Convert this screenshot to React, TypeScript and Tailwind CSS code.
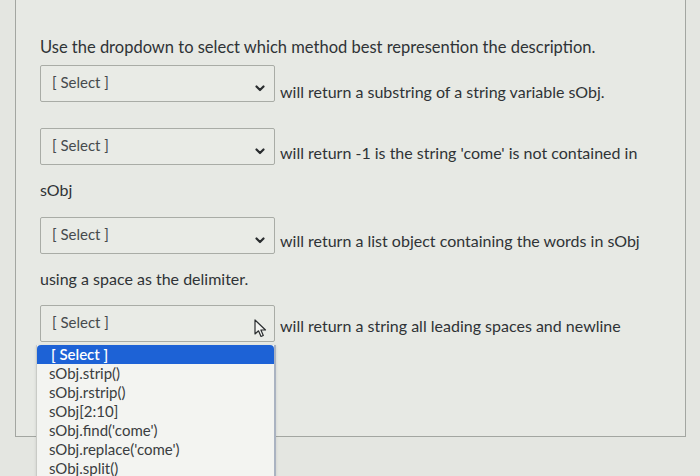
import React from "react";

// Canvas-style quiz question: "matching" dropdowns, last one opened.

const OPTIONS = [
  "sObj.strip()",
  "sObj.rstrip()",
  "sObj[2:10]",
  "sObj.find('come')",
  "sObj.replace('come')",
  "sObj.split()",
];

function Chevron() {
  return (
    <svg width="10" height="7" viewBox="0 0 10 7" className="mt-[12px] shrink-0">
      <polyline points="1.5,1.5 5,5 8.5,1.5" fill="none" stroke="#2a2d2f" strokeWidth="2.2" strokeLinecap="round" strokeLinejoin="round" />
    </svg>
  );
}

function Cursor() {
  return (
    <svg width="13" height="19" viewBox="0 0 13 19" className="mt-[6px] mr-[-2px] shrink-0">
      <path d="M1 1 L1 15 L4.5 11.8 L7 17.5 L9.3 16.5 L6.9 11 L11.5 11 Z" fill="#f4f5f2" stroke="#2a2d2f" strokeWidth="1.2" strokeLinejoin="round" />
    </svg>
  );
}

function OpenList() {
  return (
    <div className="absolute left-[-5px] top-[39px] w-[240px] h-[150px] bg-[#f3f4f1] border-l border-[#c9cbc6] border-r-2 border-r-[#aab3c1] shadow-sm flex flex-col">
      <div className="h-[19px] bg-[#1d62d6] rounded-t-[4px] pl-[14px] text-[15px] leading-[19px] font-semibold text-white">
        [ Select ]
      </div>
      {OPTIONS.map((o) => (
        <div key={o} className="pl-[12px] text-[15px] leading-[19px] text-[#3a3d40]">
          {o}
        </div>
      ))}
    </div>
  );
}

function SelectRow({
  text,
  className,
  textClass,
  open,
}: {
  text: string;
  className?: string;
  textClass?: string;
  open?: boolean;
}) {
  return (
    <div className={`flex items-start gap-[5px] ${className ?? ""}`}>
      <div className="relative w-[235px] h-[37px] shrink-0 border border-[#a9aca6] bg-[#e9ebe6] rounded-[2px] flex items-start justify-between pl-[11px] pr-[9px] pt-[7px]">
        <span className="text-[15px] leading-[18px] text-[#464a4d]">[ Select ]</span>
        {open ? <Cursor /> : <Chevron />}
        {open && <OpenList />}
      </div>
      <span className={`text-[16px] leading-5 whitespace-nowrap ${textClass ?? "mt-[17px]"}`}>{text}</span>
    </div>
  );
}

export default function App() {
  return (
    <div className="w-[700px] h-[476px] overflow-hidden bg-[#e4e6e1] font-['Lato','Liberation_Sans',sans-serif] text-[#2f3336]">
      <div className="ml-[15px] w-[671px] h-[437px] bg-[#e7e9e4] border-x border-b border-[#a3a6a1] pl-[24px] pt-[35px] flex flex-col items-start">
        <p className="text-[16.5px] leading-6">
          Use the dropdown to select which method best represention the description.
        </p>
        <SelectRow className="mt-[6px]" text="will return a substring of a string variable sObj." />
        <SelectRow className="mt-[26px]" textClass="mt-[15px]" text="will return -1 is the string 'come' is not contained in" />
        <p className="mt-[13px] text-[16px] leading-6">sObj</p>
        <SelectRow className="mt-[15px]" textClass="mt-[14px]" text="will return a list object containing the words in sObj" />
        <p className="mt-[13px] text-[16px] leading-6">using a space as the delimiter.</p>
        <SelectRow className="mt-[14px]" textClass="mt-[11px]" open text="will return a string all leading spaces and newline" />
      </div>
    </div>
  );
}
